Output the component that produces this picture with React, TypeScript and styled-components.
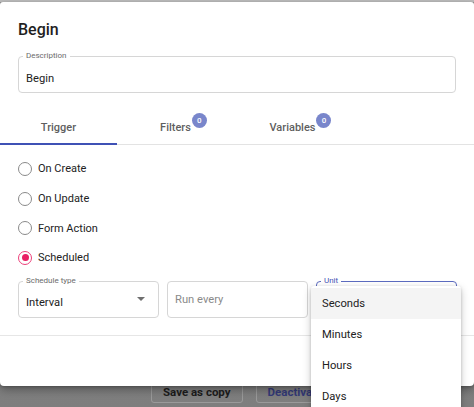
import styled, { createGlobalStyle } from "styled-components";

const GlobalStyle = createGlobalStyle`
  html, body {
    margin: 0;
    padding: 0;
    background: #838383;
    font-family: Roboto, "Liberation Sans", Arial, sans-serif;
  }
  * { box-sizing: border-box; }
`;

const Page = styled.div`
  position: relative;
  width: 474px;
  height: 407px;
  overflow: hidden;
  background: linear-gradient(180deg, #8c8c8c 0%, #7e7e7e 100%);
`;

const TopStrip = styled.div`
  height: 2px;
  background: #bdbdbd;
`;

const Dialog = styled.div`
  position: relative;
  z-index: 1;
  height: 384px;
  background: #ffffff;
  border-radius: 3px 3px 4px 4px;
  box-shadow: 0 4px 10px rgba(0, 0, 0, 0.3), 0 1px 3px rgba(0, 0, 0, 0.2);
  padding-top: 18px;
  display: flex;
  flex-direction: column;
`;

const Title = styled.h2`
  margin: 0 18px;
  font-size: 16px;
  line-height: 20px;
  font-weight: 500;
  color: #1f1f1f;
`;

const Field = styled.div<{ $focused?: boolean }>`
  position: relative;
  flex: 1;
  height: 37px;
  border: ${(p) => (p.$focused ? "1.5px solid #5c6bc0" : "1px solid #d6d6d6")};
  border-radius: 4px;
  display: flex;
  align-items: center;
  padding: 0 7px;
`;

const FieldLabel = styled.span<{ $focused?: boolean }>`
  position: absolute;
  top: -6px;
  left: 4px;
  padding: 0 3px;
  background: #ffffff;
  font-size: 8px;
  line-height: 10px;
  color: ${(p) => (p.$focused ? "#3f51b5" : "#6b6b6b")};
`;

const FieldValue = styled.span<{ $placeholder?: boolean }>`
  font-size: 11.2px;
  color: ${(p) => (p.$placeholder ? "#8a8a8a" : "#222222")};
  padding-top: ${(p) => (p.$placeholder ? "1px" : "6px")};
`;

const DescriptionField = styled(Field)`
  flex: none;
  margin: 16px 18px 0;
  padding-top: 1px;
`;

const Tabs = styled.div`
  display: flex;
  margin-top: 17px;
  border-bottom: 1px solid #e3e3e3;
`;

const Tab = styled.div<{ $active?: boolean }>`
  width: 117px;
  height: 35px;
  display: flex;
  align-items: center;
  justify-content: center;
  padding-top: 1px;
  font-size: 11px;
  font-weight: 500;
  color: #5f5f5f;
  border-bottom: 2px solid ${(p) => (p.$active ? "#3f51b5" : "transparent")};
  margin-bottom: -1px;
`;

const TabLabel = styled.span`
  position: relative;
`;

const Badge = styled.span`
  position: absolute;
  top: -8px;
  right: -16px;
  width: 15px;
  height: 15px;
  border-radius: 50%;
  background: #7986cb;
  color: #ffffff;
  font-size: 8px;
  font-weight: 500;
  display: flex;
  align-items: center;
  justify-content: center;
`;

const RadioGroup = styled.div`
  display: flex;
  flex-direction: column;
  margin: 9px 18px 0;
`;

const RadioRow = styled.label`
  height: 29.7px;
  display: flex;
  align-items: center;
  gap: 6px;
  font-size: 11px;
  color: #222222;
`;

const RadioCircle = styled.span<{ $checked?: boolean }>`
  width: 14px;
  height: 14px;
  border-radius: 50%;
  border: 1.5px solid ${(p) => (p.$checked ? "#ec407a" : "#8a8a8a")};
  display: flex;
  align-items: center;
  justify-content: center;
  &::after {
    content: "";
    width: 7px;
    height: 7px;
    border-radius: 50%;
    background: ${(p) => (p.$checked ? "#e91e63" : "transparent")};
  }
`;

const ScheduleRow = styled.div`
  display: flex;
  gap: 8px;
  margin: 8px 17px 0 18px;
`;

const Arrow = styled.span`
  margin-left: auto;
  margin-right: 6px;
  width: 0;
  height: 0;
  border-left: 4px solid transparent;
  border-right: 4px solid transparent;
  border-top: 4px solid #6f6f6f;
`;

const Divider = styled.div`
  margin-top: 17px;
  height: 1px;
  background: #e6e6e6;
`;

const Footer = styled.div`
  display: flex;
  gap: 13px;
  padding-left: 151px;
`;

const GhostButton = styled.div<{ $primary?: boolean }>`
  height: 27px;
  margin-top: -10px;
  padding: 5px 11px 0;
  border: 1px solid #9a9a9a;
  border-radius: 3px;
  background: transparent;
  font-size: 11.5px;
  font-weight: 700;
  line-height: 20px;
  color: ${(p) => (p.$primary ? "#343a78" : "#1c1c1c")};
`;

const Menu = styled.ul`
  position: absolute;
  z-index: 5;
  top: 286px;
  left: 311px;
  width: 150px;
  margin: 0;
  padding: 2px 0 0;
  list-style: none;
  background: #ffffff;
  border-radius: 3px;
  box-shadow: 0 3px 8px rgba(0, 0, 0, 0.22), 0 1px 3px rgba(0, 0, 0, 0.18);
`;

const MenuItem = styled.li<{ $selected?: boolean }>`
  height: 31px;
  display: flex;
  align-items: center;
  padding-left: 11px;
  font-size: 11.2px;
  color: #222222;
  background: ${(p) => (p.$selected ? "#f4f4f4" : "transparent")};
`;

const triggers = [
  { label: "On Create", checked: false },
  { label: "On Update", checked: false },
  { label: "Form Action", checked: false },
  { label: "Scheduled", checked: true },
];

const units = ["Seconds", "Minutes", "Hours", "Days"];

export default function App() {
  return (
    <Page>
      <GlobalStyle />
      <TopStrip />
      <Dialog>
        <Title>Begin</Title>
        <DescriptionField>
          <FieldLabel>Description</FieldLabel>
          <FieldValue>Begin</FieldValue>
        </DescriptionField>

        <Tabs>
          <Tab $active>
            <TabLabel>Trigger</TabLabel>
          </Tab>
          <Tab>
            <TabLabel>
              Filters
              <Badge>0</Badge>
            </TabLabel>
          </Tab>
          <Tab>
            <TabLabel>
              Variables
              <Badge>0</Badge>
            </TabLabel>
          </Tab>
        </Tabs>

        <RadioGroup>
          {triggers.map((t) => (
            <RadioRow key={t.label}>
              <RadioCircle $checked={t.checked} />
              {t.label}
            </RadioRow>
          ))}
        </RadioGroup>

        <ScheduleRow>
          <Field>
            <FieldLabel>Schedule type</FieldLabel>
            <FieldValue>Interval</FieldValue>
            <Arrow />
          </Field>
          <Field>
            <FieldValue $placeholder>Run every</FieldValue>
          </Field>
          <Field $focused>
            <FieldLabel $focused>Unit</FieldLabel>
          </Field>
        </ScheduleRow>

        <Divider />
      </Dialog>

      <Footer>
        <GhostButton>Save as copy</GhostButton>
        <GhostButton $primary>Deactivate</GhostButton>
      </Footer>

      <Menu>
        {units.map((u, i) => (
          <MenuItem key={u} $selected={i === 0}>
            {u}
          </MenuItem>
        ))}
      </Menu>
    </Page>
  );
}
